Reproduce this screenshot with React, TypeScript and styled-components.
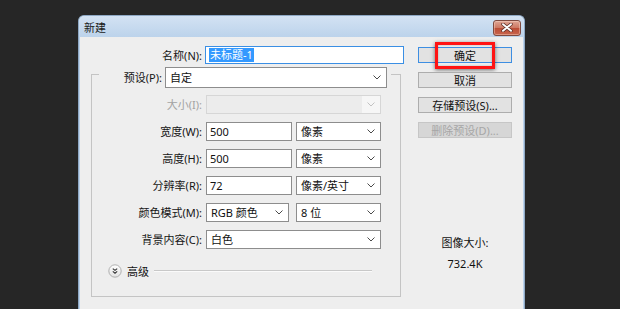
import React from "react";
import styled, { createGlobalStyle, css } from "styled-components";

const Global = createGlobalStyle`
  html, body { margin: 0; padding: 0; background: #262626; overflow: hidden; }
  * { box-sizing: border-box; }
`;

const FONT = `"Noto Sans", "Noto Sans CJK SC", sans-serif`;

const Desktop = styled.div`
  width: 620px;
  height: 309px;
  overflow: hidden;
  background: #262626;
  padding: 15px 0 0 78px;
  font-family: ${FONT};
  font-size: 11px;
  color: #111;
`;

const Window = styled.div`
  width: 447px;
  height: 310px;
  border: 1px solid #8ea8c4;
  border-bottom: none;
  border-radius: 6px 6px 0 0;
  background: #bcd2ea;
  display: flex;
  flex-direction: column;
`;

const TitleBar = styled.div`
  height: 21px;
  flex: none;
  display: flex;
  align-items: center;
  justify-content: space-between;
  padding: 0 3px 0 5px;
  border-radius: 5px 5px 0 0;
  background: linear-gradient(#d3e2f3, #bcd3eb);
`;

const Title = styled.span`
  font-size: 11px;
  color: #1a1a1a;
  line-height: 1;
  padding-top: 1px;
`;

const CloseButton = styled.div`
  width: 28px;
  height: 16px;
  margin-top: 2px;
  border: 1px solid #7e4a40;
  border-radius: 3px;
  background: linear-gradient(#dfa594, #cd7863 48%, #bb4d36 52%, #c8644c);
  box-shadow: inset 0 0 0 1px rgba(255, 225, 210, 0.4);
  display: flex;
  align-items: center;
  justify-content: center;
`;

const Body = styled.div`
  flex: 1;
  margin: 0 1px;
  background: #eeeeee;
  display: flex;
  padding-top: 9px;
`;

const LeftPane = styled.div`
  width: 324px;
  flex: none;
  display: flex;
  flex-direction: column;
`;

const NameRow = styled.div`
  display: grid;
  grid-template-columns: 122px 199px;
  column-gap: 3px;
  align-items: center;
`;

const Label = styled.span<{ $disabled?: boolean }>`
  text-align: right;
  white-space: nowrap;
  font-size: 11px;
  line-height: 1;
  color: ${(p) => (p.$disabled ? "#a3a3a3" : "#151515")};
`;

const TextBox = styled.div<{ $focused?: boolean; $w?: number }>`
  height: ${(p) => (p.$focused ? 18 : 19)}px;
  width: ${(p) => (p.$w ? `${p.$w}px` : "auto")};
  border: 1px solid ${(p) => (p.$focused ? "#3b8fe4" : "#8d8d8d")};
  background: #fff;
  display: flex;
  align-items: center;
  padding: 0 3px;
  font-size: 11px;
  line-height: 1;
  white-space: nowrap;
`;

const Selected = styled.span`
  background: #3399ff;
  color: #fff;
  padding: 1px;
  line-height: 12px;
`;

const Combo = styled.div<{ $disabled?: boolean; $w?: number; $h?: number }>`
  height: ${(p) => p.$h ?? 19}px;
  width: ${(p) => (p.$w ? `${p.$w}px` : "auto")};
  border: 1px solid #8d8d8d;
  background: #fff;
  display: flex;
  align-items: center;
  justify-content: space-between;
  padding: 0 5px 0 4px;
  font-size: 11px;
  line-height: 1;
  white-space: nowrap;
  ${(p) =>
    p.$disabled &&
    css`
      border-color: #d6d6d6;
      background: linear-gradient(to right, #ececec calc(100% - 18px), #f6f6f6 calc(100% - 18px));
    `}
`;

const Chevron = ({ disabled }: { disabled?: boolean }) => (
  <svg width="8" height="5" viewBox="0 0 8 5">
    <polyline
      points="0.5,0.5 4,4 7.5,0.5"
      fill="none"
      stroke={disabled ? "#c2c2c2" : "#4a4a4a"}
      strokeWidth="1"
    />
  </svg>
);

const Group = styled.fieldset`
  margin: -4px 0 0 11px;
  width: 310px;
  height: 237px;
  padding: 7px 0 0 0;
  border: 1px solid #c4c4c4;
  min-inline-size: 0;
  display: flex;
  flex-direction: column;
`;

const Legend = styled.legend`
  margin-left: 7px;
  padding: 7px 4px 0 0;
`;

const LegendInner = styled.div`
  display: flex;
  align-items: center;
  gap: 3px;
`;

const LegendLabel = styled(Label)`
  width: 63px;
`;

const Rows = styled.div`
  display: flex;
  flex-direction: column;
  gap: 8px;
`;

const Row = styled.div`
  display: grid;
  grid-template-columns: 110px 175px;
  column-gap: 4px;
  align-items: center;
`;

const Pair = styled.div`
  display: flex;
  justify-content: space-between;
`;

const Advanced = styled.div`
  display: flex;
  align-items: center;
  margin: 15px 28px 0 16px;
  height: 14px;
`;

const AdvancedText = styled.span`
  margin: 0 5px;
  font-size: 11px;
  line-height: 1;
`;

const Rule = styled.div`
  flex: 1;
  height: 2px;
  border-top: 1px solid #c8c8c8;
  border-bottom: 1px solid #fafafa;
`;

const RightPane = styled.div`
  width: 94px;
  margin-left: 14px;
  padding-top: 1px;
  display: flex;
  flex-direction: column;
`;

const Buttons = styled.div`
  display: flex;
  flex-direction: column;
  gap: 9px;
`;

const Button = styled.div<{ $default?: boolean; $disabled?: boolean }>`
  position: relative;
  height: 16px;
  border: 1px solid #adadad;
  background: #e2e2e2;
  display: flex;
  align-items: center;
  justify-content: center;
  font-size: 11px;
  line-height: 1;
  color: #111;
  ${(p) =>
    p.$default &&
    css`
      border-color: #3d8ee2;
    `}
  ${(p) =>
    p.$disabled &&
    css`
      border-color: #c6c6c6;
      background: #d6d6d6;
      color: #a6a6a6;
    `}
`;

const Highlight = styled.div`
  position: absolute;
  left: 16px;
  top: -6px;
  width: 60px;
  height: 27px;
  border: 3px solid #ff1313;
  box-shadow: 0 1px 4px rgba(0, 0, 0, 0.55), inset 0 0 2px rgba(0, 0, 0, 0.3);
`;

const Info = styled.div`
  margin-top: 99px;
  display: flex;
  flex-direction: column;
  align-items: center;
  gap: 10px;
  font-size: 11px;
  line-height: 11px;
`;

const AdvancedIcon = () => (
  <svg width="14" height="14" viewBox="0 0 14 14">
    <defs>
      <linearGradient id="advg" x1="0" y1="0" x2="0" y2="1">
        <stop offset="0" stopColor="#ffffff" />
        <stop offset="1" stopColor="#e2e2e2" />
      </linearGradient>
    </defs>
    <circle cx="7" cy="7" r="6.2" fill="url(#advg)" stroke="#a8a8a8" strokeWidth="0.9" />
    <polyline points="4.8,4.6 7,6.4 9.2,4.6" fill="none" stroke="#333" strokeWidth="1.1" />
    <polyline points="4.8,7.4 7,9.2 9.2,7.4" fill="none" stroke="#333" strokeWidth="1.1" />
  </svg>
);

const CloseGlyph = () => (
  <svg width="12" height="9" viewBox="0 0 12 9">
    <path d="M2 1.2 L10 7.8 M10 1.2 L2 7.8" stroke="#5e3028" strokeWidth="3.4" strokeLinecap="round" />
    <path d="M2 1.2 L10 7.8 M10 1.2 L2 7.8" stroke="#ffffff" strokeWidth="1.9" strokeLinecap="round" />
  </svg>
);

export default function App() {
  return (
    <>
      <Global />
      <Desktop>
        <Window>
          <TitleBar>
            <Title>新建</Title>
            <CloseButton>
              <CloseGlyph />
            </CloseButton>
          </TitleBar>
          <Body>
            <LeftPane>
              <NameRow>
                <Label>名称(N):</Label>
                <TextBox $focused>
                  <Selected>未标题-1</Selected>
                </TextBox>
              </NameRow>
              <Group>
                <Legend>
                  <LegendInner>
                    <LegendLabel>预设(P):</LegendLabel>
                    <Combo $w={222} $h={21}>
                      <span>自定</span>
                      <Chevron />
                    </Combo>
                  </LegendInner>
                </Legend>
                <Rows>
                  <Row>
                    <Label $disabled>大小(I):</Label>
                    <Combo $disabled>
                      <span />
                      <Chevron disabled />
                    </Combo>
                  </Row>
                  <Row>
                    <Label>宽度(W):</Label>
                    <Pair>
                      <TextBox $w={86}>500</TextBox>
                      <Combo $w={85}>
                        <span>像素</span>
                        <Chevron />
                      </Combo>
                    </Pair>
                  </Row>
                  <Row>
                    <Label>高度(H):</Label>
                    <Pair>
                      <TextBox $w={86}>500</TextBox>
                      <Combo $w={85}>
                        <span>像素</span>
                        <Chevron />
                      </Combo>
                    </Pair>
                  </Row>
                  <Row>
                    <Label>分辨率(R):</Label>
                    <Pair>
                      <TextBox $w={86}>72</TextBox>
                      <Combo $w={85}>
                        <span>像素/英寸</span>
                        <Chevron />
                      </Combo>
                    </Pair>
                  </Row>
                  <Row>
                    <Label>颜色模式(M):</Label>
                    <Pair>
                      <Combo $w={83}>
                        <span>RGB 颜色</span>
                        <Chevron />
                      </Combo>
                      <Combo $w={85}>
                        <span>8 位</span>
                        <Chevron />
                      </Combo>
                    </Pair>
                  </Row>
                  <Row>
                    <Label>背景内容(C):</Label>
                    <Combo>
                      <span>白色</span>
                      <Chevron />
                    </Combo>
                  </Row>
                </Rows>
                <Advanced>
                  <AdvancedIcon />
                  <AdvancedText>高级</AdvancedText>
                  <Rule />
                </Advanced>
              </Group>
            </LeftPane>
            <RightPane>
              <Buttons>
                <Button $default>
                  确定
                  <Highlight />
                </Button>
                <Button>取消</Button>
                <Button>存储预设(S)...</Button>
                <Button $disabled>删除预设(D)...</Button>
              </Buttons>
              <Info>
                <span>图像大小:</span>
                <span>732.4K</span>
              </Info>
            </RightPane>
          </Body>
        </Window>
      </Desktop>
    </>
  );
}
